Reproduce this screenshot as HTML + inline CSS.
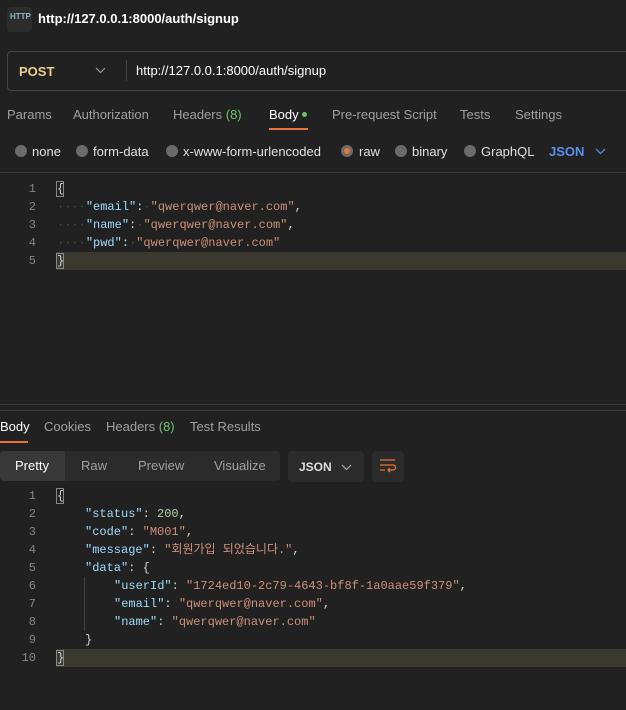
<!DOCTYPE html>
<html><head><meta charset="utf-8"><style>
*{margin:0;padding:0;box-sizing:border-box}
body{width:626px;height:710px;background:#212121;font-family:"Liberation Sans",sans-serif;color:#e0e0e0;position:relative;overflow:hidden;font-size:13px}
.a{position:absolute;white-space:nowrap}
.g{color:#a0a0a0}
.code{font-family:"Liberation Mono","Noto Sans CJK KR",monospace;font-size:12px;line-height:18px}
.ln{position:absolute;width:36px;text-align:right;color:#858585}
.k{color:#9cdcfe}.s{color:#ce9178}.n{color:#b5cea8}.p{color:#d4d4d4}.d{color:#4a4a4a}
.rad{position:absolute;width:12px;height:12px;border-radius:50%;background:#6b6b6b}
.br{position:absolute;width:8px;height:16px;border:1px solid #888;line-height:14px;text-align:center;color:#d4d4d4}
</style></head><body>
<div class="a" style="left:7px;top:7px;width:25px;height:25px;border-radius:4px;background:#2c2c2c"></div>
<div class="a" style="left:10px;top:12px;font-size:8px;color:#8fb8c8;font-weight:bold">HTTP</div>
<div class="a" style="left:38px;top:11px;font-weight:bold;font-size:13px;color:#fff">http://127.0.0.1:8000/auth/signup</div>

<div class="a" style="left:7px;top:51px;width:630px;height:40px;border:1px solid #454545;border-radius:4px"></div>
<div class="a" style="left:19px;top:64px;font-weight:bold;color:#e8d28b;font-size:13px">POST</div>
<svg class="a" style="left:95px;top:67px" width="11" height="7" viewBox="0 0 11 7"><path d="M1 1l4.5 4.5L10 1" stroke="#999" stroke-width="1.2" fill="none"/></svg>
<div class="a" style="left:126px;top:60px;width:1px;height:21px;background:#444"></div>
<div class="a" style="left:136px;top:63px;color:#fff;font-size:13px">http://127.0.0.1:8000/auth/signup</div>

<div class="a g" style="left:7px;top:107px">Params</div>
<div class="a g" style="left:73px;top:107px">Authorization</div>
<div class="a g" style="left:173px;top:107px">Headers <span style="color:#6cc36f">(8)</span></div>
<div class="a" style="left:269px;top:107px;color:#fff">Body</div>
<div class="a" style="left:302px;top:112px;width:5px;height:5px;border-radius:50%;background:#6cc36f"></div>
<div class="a" style="left:269px;top:128px;width:39px;height:2px;background:#e8743b"></div>
<div class="a g" style="left:332px;top:107px">Pre-request Script</div>
<div class="a g" style="left:460px;top:107px">Tests</div>
<div class="a g" style="left:515px;top:107px">Settings</div>

<div class="rad" style="left:15px;top:145px"></div><div class="a" style="left:32px;top:144px">none</div>
<div class="rad" style="left:76px;top:145px"></div><div class="a" style="left:93px;top:144px">form-data</div>
<div class="rad" style="left:166px;top:145px"></div><div class="a" style="left:183px;top:144px">x-www-form-urlencoded</div>
<div class="rad" style="left:341px;top:145px"></div><div class="a" style="left:344px;top:148px;width:6px;height:6px;border-radius:50%;background:#e8743b"></div>
<div class="a" style="left:359px;top:144px">raw</div>
<div class="rad" style="left:395px;top:145px"></div><div class="a" style="left:412px;top:144px">binary</div>
<div class="rad" style="left:464px;top:145px"></div><div class="a" style="left:481px;top:144px">GraphQL</div>
<div class="a" style="left:549px;top:144px;color:#5a8ff2;font-weight:bold">JSON</div>
<svg class="a" style="left:595px;top:148px" width="11" height="7" viewBox="0 0 11 7"><path d="M1 1l4.5 4.5L10 1" stroke="#5a8ff2" stroke-width="1.2" fill="none"/></svg>

<div class="a" style="left:0;top:172px;width:626px;height:1px;background:#383838"></div>

<div class="a" style="left:56px;top:252px;width:570px;height:18px;background:#393930"></div>
<div class="code">
<div class="ln" style="top:180px">1</div><div class="ln" style="top:198px">2</div><div class="ln" style="top:216px">3</div><div class="ln" style="top:234px">4</div><div class="ln" style="top:252px">5</div>
<div class="br" style="left:56px;top:181px">{</div>
<div class="a" style="left:57px;top:198px"><span class="d">····</span><span class="k">"email"</span><span class="p">:</span><span class="d">·</span><span class="s">"qwerqwer@naver.com"</span><span class="p">,</span></div>
<div class="a" style="left:57px;top:216px"><span class="d">····</span><span class="k">"name"</span><span class="p">:</span><span class="d">·</span><span class="s">"qwerqwer@naver.com"</span><span class="p">,</span></div>
<div class="a" style="left:57px;top:234px"><span class="d">····</span><span class="k">"pwd"</span><span class="p">:</span><span class="d">·</span><span class="s">"qwerqwer@naver.com"</span></div>
<div class="br" style="left:56px;top:253px">}</div>
</div>

<div class="a" style="left:0;top:404px;width:626px;height:1px;background:#383838"></div>
<div class="a" style="left:0;top:410px;width:626px;height:1px;background:#383838"></div>

<div class="a" style="left:0;top:419px;color:#fff">Body</div>
<div class="a" style="left:0;top:441px;width:28px;height:2px;background:#e8743b"></div>
<div class="a g" style="left:44px;top:419px">Cookies</div>
<div class="a g" style="left:106px;top:419px">Headers <span style="color:#6cc36f">(8)</span></div>
<div class="a g" style="left:190px;top:419px">Test Results</div>

<div class="a" style="left:0;top:451px;width:280px;height:30px;background:#2b2b2b;border-radius:4px"></div>
<div class="a" style="left:0;top:451px;width:65px;height:30px;background:#383838;border-radius:4px 0 0 4px"></div>
<div class="a" style="left:15px;top:458px;color:#fff">Pretty</div>
<div class="a g" style="left:81px;top:458px">Raw</div>
<div class="a g" style="left:138px;top:458px">Preview</div>
<div class="a g" style="left:214px;top:458px">Visualize</div>
<div class="a" style="left:288px;top:451px;width:76px;height:31px;background:#2b2b2b;border-radius:4px"></div>
<div class="a" style="left:299px;top:460px;font-weight:bold;font-size:12px;color:#ddd">JSON</div>
<svg class="a" style="left:341px;top:464px" width="11" height="7" viewBox="0 0 11 7"><path d="M1 1l4.5 4.5L10 1" stroke="#aaa" stroke-width="1.2" fill="none"/></svg>
<div class="a" style="left:372px;top:451px;width:32px;height:31px;background:#2b2b2b;border-radius:4px"></div>
<svg class="a" style="left:379px;top:458px" width="18" height="16" viewBox="0 0 18 16"><g stroke="#e8743b" stroke-width="1.3" fill="none"><path d="M1 2h15M1 7h13a2.5 2.5 0 0 1 0 5H9M11 10l-2 2 2 2M1 12h5"/></g></svg>

<div class="a" style="left:56px;top:649px;width:570px;height:18px;background:#393930"></div>
<div class="a" style="left:84px;top:577px;width:1px;height:54px;background:#404040"></div>
<div class="code">
<div class="ln" style="top:487px">1</div><div class="ln" style="top:505px">2</div><div class="ln" style="top:523px">3</div><div class="ln" style="top:541px">4</div><div class="ln" style="top:559px">5</div><div class="ln" style="top:577px">6</div><div class="ln" style="top:595px">7</div><div class="ln" style="top:613px">8</div><div class="ln" style="top:631px">9</div><div class="ln" style="top:649px">10</div>
<div class="br" style="left:56px;top:488px">{</div>
<div class="a" style="left:85px;top:505px"><span class="k">"status"</span><span class="p">: </span><span class="n">200</span><span class="p">,</span></div>
<div class="a" style="left:85px;top:523px"><span class="k">"code"</span><span class="p">: </span><span class="s">"M001"</span><span class="p">,</span></div>
<div class="a" style="left:85px;top:541px"><span class="k">"message"</span><span class="p">: </span><span class="s">"회원가입 되었습니다."</span><span class="p">,</span></div>
<div class="a" style="left:85px;top:559px"><span class="k">"data"</span><span class="p">: {</span></div>
<div class="a" style="left:114px;top:577px"><span class="k">"userId"</span><span class="p">: </span><span class="s">"1724ed10-2c79-4643-bf8f-1a0aae59f379"</span><span class="p">,</span></div>
<div class="a" style="left:114px;top:595px"><span class="k">"email"</span><span class="p">: </span><span class="s">"qwerqwer@naver.com"</span><span class="p">,</span></div>
<div class="a" style="left:114px;top:613px"><span class="k">"name"</span><span class="p">: </span><span class="s">"qwerqwer@naver.com"</span></div>
<div class="a p" style="left:85px;top:631px">}</div>
<div class="br" style="left:56px;top:650px">}</div>
</div>
</body></html>
